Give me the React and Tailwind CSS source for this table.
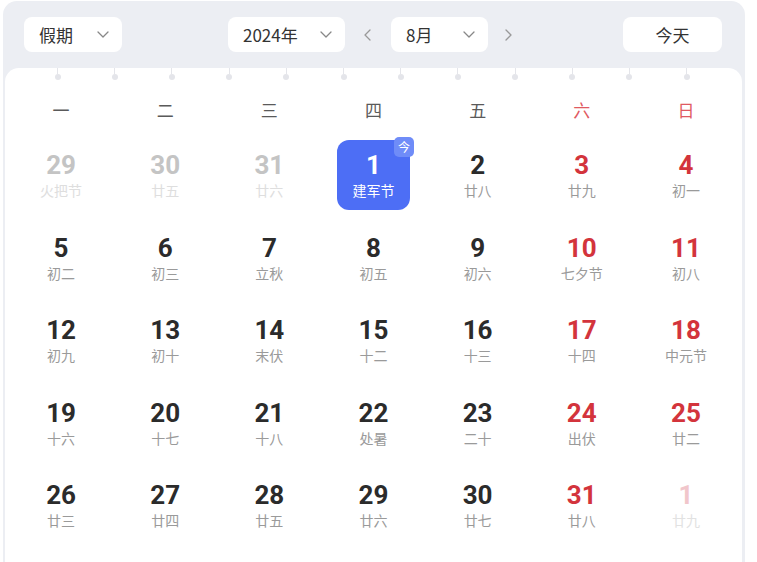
import React from 'react';

const cjk = { fontFamily: '"Noto Sans CJK SC", "Noto Sans", sans-serif' };
const num = { fontFamily: 'Roboto, "Liberation Sans", sans-serif' };

const weekdays = ['一', '二', '三', '四', '五', '六', '日'];

// third field: prev / next month, or today
const days = [
  ['29', '火把节', 'prev'], ['30', '廿五', 'prev'], ['31', '廿六', 'prev'], ['1', '建军节', 'today'], ['2', '廿八'], ['3', '廿九'], ['4', '初一'],
  ['5', '初二'], ['6', '初三'], ['7', '立秋'], ['8', '初五'], ['9', '初六'], ['10', '七夕节'], ['11', '初八'],
  ['12', '初九'], ['13', '初十'], ['14', '末伏'], ['15', '十二'], ['16', '十三'], ['17', '十四'], ['18', '中元节'],
  ['19', '十六'], ['20', '十七'], ['21', '十八'], ['22', '处暑'], ['23', '二十'], ['24', '出伏'], ['25', '廿二'],
  ['26', '廿三'], ['27', '廿四'], ['28', '廿五'], ['29', '廿六'], ['30', '廿七'], ['31', '廿八'], ['1', '廿九', 'next'],
];

const Chevron = ({ dir = 'down', className = '' }) => {
  const d = dir === 'down' ? 'M2 4l5 5 5-5' : dir === 'left' ? 'M9 2L4 7l5 5' : 'M5 2l5 5-5 5';
  return (
    <svg width="14" height="14" viewBox="0 0 14 14" className={className} fill="none" stroke="currentColor" strokeWidth="1.3" strokeLinecap="round" strokeLinejoin="round">
      <path d={d} />
    </svg>
  );
};

const Select = ({ label, width }) => (
  <div className={`${width} h-[35px] bg-white rounded-[8px] flex items-center justify-between pl-[15px] pr-[12px] text-[17px] text-[#333]`}>
    <span className="leading-none" style={cjk}>{label}</span>
    <Chevron className="text-[#888]" />
  </div>
);

const Pin = () => (
  <div className="w-[57.2px] flex justify-center">
    <div className="flex flex-col items-center">
      <div className="w-[1px] h-[6px] bg-[#e4e5ea]" />
      <div className="w-[6px] h-[6px] rounded-full bg-[#e4e5ea]" />
    </div>
  </div>
);

function DayCell({ n, lunar, kind, col }) {
  const weekend = col >= 5;
  if (kind === 'today') {
    return (
      <div className="flex justify-center">
        <div className="relative w-[73px] h-[70px] rounded-[12px] bg-[#4d6ef5] flex flex-col items-center pt-[10px]">
          <div className="text-[26px] leading-[30px] font-bold text-white" style={num}>{n}</div>
          <div className="text-[14px] leading-[20px] text-white" style={cjk}>{lunar}</div>
          <div className="absolute -top-[3px] -right-[4px] w-[20px] h-[20px] rounded-[5px] bg-[#6f8cf8] flex items-center justify-center text-[12px] leading-none text-white" style={cjk}>今</div>
        </div>
      </div>
    );
  }
  let numColor = weekend ? 'text-[#d3343c]' : 'text-[#2b2b2b]';
  let lunarColor = 'text-[#9a9a9a]';
  if (kind === 'prev') { numColor = 'text-[#c4c4c4]'; lunarColor = 'text-[#dedede]'; }
  if (kind === 'next') { numColor = 'text-[#f1c6cb]'; lunarColor = 'text-[#e2e2e2]'; }
  return (
    <div className="h-[70px] flex flex-col items-center pt-[10px]">
      <div className={`text-[26px] leading-[30px] font-bold ${numColor}`} style={num}>{n}</div>
      <div className={`text-[14px] leading-[20px] ${lunarColor}`} style={cjk}>{lunar}</div>
    </div>
  );
}

export default function App() {
  return (
    <div className="w-[757px] h-[562px] overflow-hidden bg-white">
      <div className="ml-[3px] mt-[1px] w-[742px] h-[600px] bg-[#eceef3] rounded-t-[14px] flex flex-col">
        <div className="h-[67px] flex items-start pt-[16px] pl-[21px] pr-[23px]">
          <Select label="假期" width="w-[98px]" />
          <div className="ml-[106px]"><Select label="2024年" width="w-[117px]" /></div>
          <div className="w-[46px] h-[35px] flex items-center justify-center text-[#999]"><Chevron dir="left" /></div>
          <Select label="8月" width="w-[97px]" />
          <div className="w-[40px] h-[35px] flex items-center justify-center text-[#999]"><Chevron dir="right" /></div>
          <div className="ml-auto w-[99px] h-[35px] bg-white rounded-[8px] flex items-center justify-center text-[17px] text-[#333]" style={cjk}>今天</div>
        </div>
        <div className="ml-[2px] w-[737px] flex-1 bg-white rounded-t-[14px] px-[4px]">
          <div className="h-[27px] flex pl-[20px]">
            {Array.from({ length: 12 }).map((_, i) => <Pin key={i} />)}
          </div>
          <div className="grid grid-cols-7 h-[30px] items-center">
            {weekdays.map((w, i) => (
              <div key={w} className={`text-center text-[17px] leading-[30px] ${i >= 5 ? 'text-[#df5a62]' : 'text-[#5a5a5a]'}`} style={cjk}>{w}</div>
            ))}
          </div>
          <div className="grid grid-cols-7 gap-y-[12.5px] mt-[15px]">
            {days.map(([n, lunar, kind], i) => (
              <DayCell key={i} n={n} lunar={lunar} kind={kind} col={i % 7} />
            ))}
          </div>
        </div>
      </div>
    </div>
  );
}
